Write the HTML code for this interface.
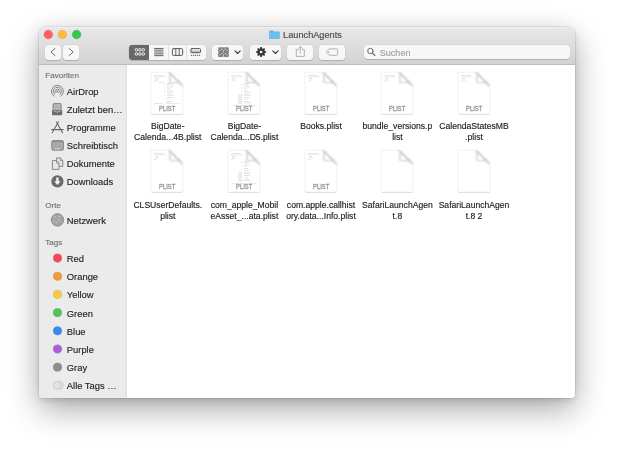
<!DOCTYPE html>
<html><head><meta charset="utf-8">
<style>
html,body{margin:0;padding:0;}
body{will-change:transform;width:642px;height:475px;overflow:hidden;background:#fff;position:relative;font-family:"Liberation Sans",sans-serif;}
.abs{position:absolute;}
.t{position:absolute;white-space:nowrap;-webkit-text-stroke:0.15px currentColor;}
#shadow{position:absolute;left:39px;top:27px;width:536px;height:371px;border-radius:5px 5px 4px 4px;box-shadow:0 12px 32px rgba(0,0,0,0.33),0 3px 6px rgba(0,0,0,0.10),0 0 26px rgba(0,0,0,0.05);}
#win{position:absolute;left:39px;top:27px;width:536px;height:371px;border-radius:5px 5px 4px 4px;overflow:hidden;box-shadow:0 0 0 0.5px rgba(0,0,0,0.14);background:#fff;}
#toolbar{position:absolute;left:0;top:0;width:100%;height:37px;box-shadow:inset 0 1px 0 rgba(255,255,255,0.3);background:linear-gradient(#e8e8e8,#d3d3d3);border-bottom:1px solid #bdbdbd;}
#sidebar{position:absolute;left:0;top:38px;width:88px;bottom:0;background:#ebebeb;box-shadow:inset -1px 0 0 #e0e0e0, inset -2px 0 0 #e6e6e6;}
.btn{position:absolute;background:#f7f7f7;box-shadow:0 0.5px 0.6px rgba(0,0,0,0.28),0 0 0 0.4px rgba(0,0,0,0.07);}
.lbl{position:absolute;width:80px;text-align:center;white-space:nowrap;-webkit-text-stroke:0.15px currentColor;}
</style></head><body>
<div id="shadow"></div>
<div id="win"><div id="toolbar"></div><div id="sidebar"></div></div>
<div class="btn" style="left:44.70px;top:44.50px;width:16.50px;height:15.00px;border-radius:3px;"></div><div class="btn" style="left:62.90px;top:44.50px;width:16.50px;height:15.00px;border-radius:3px;"></div><div class="btn" style="left:128.90px;top:44.50px;width:77.10px;height:15.00px;border-radius:3px;"></div><div class="abs" style="left:128.9px;top:44.5px;width:20.3px;height:15.00px;background:#686868;border-radius:3px 0 0 3px;"></div><div class="abs" style="left:168.3px;top:44.5px;width:0.6px;height:15.00px;background:#e2e2e2;"></div><div class="abs" style="left:186.3px;top:44.5px;width:0.6px;height:15.00px;background:#e2e2e2;"></div><div class="btn" style="left:212.10px;top:44.50px;width:31.40px;height:15.00px;border-radius:3px;"></div><div class="btn" style="left:250.00px;top:44.50px;width:30.80px;height:15.00px;border-radius:3px;"></div><div class="btn" style="left:287.00px;top:44.50px;width:25.90px;height:15.00px;border-radius:3px;"></div><div class="btn" style="left:318.90px;top:44.50px;width:25.90px;height:15.00px;border-radius:3px;"></div><div class="btn" style="left:363.50px;top:44.60px;width:206.50px;height:14.10px;border-radius:3.5px;"></div>
<svg class="abs" style="left:0;top:0" width="642" height="475" viewBox="0 0 642 475"><path d="M55.0,48.4 L50.9,51.95 L55.0,55.5" fill="none" stroke-linecap="round" stroke-linejoin="round" stroke="#686868" stroke-width="0.95"/><path d="M69.1,48.4 L73.2,51.95 L69.1,55.5" fill="none" stroke-linecap="round" stroke-linejoin="round" stroke="#686868" stroke-width="0.95"/><circle cx="136.4" cy="49.8" r="1.3" fill="none" stroke="#fff" stroke-width="0.85"/><circle cx="136.4" cy="54.0" r="1.3" fill="none" stroke="#fff" stroke-width="0.85"/><circle cx="139.85" cy="49.8" r="1.3" fill="none" stroke="#fff" stroke-width="0.85"/><circle cx="139.85" cy="54.0" r="1.3" fill="none" stroke="#fff" stroke-width="0.85"/><circle cx="143.3" cy="49.8" r="1.3" fill="none" stroke="#fff" stroke-width="0.85"/><circle cx="143.3" cy="54.0" r="1.3" fill="none" stroke="#fff" stroke-width="0.85"/><rect x="154.2" y="48.4" width="9.2" height="7.4" fill="#bcbcbc"/><rect x="154.2" y="47.949999999999996" width="9.2" height="0.9" fill="#5e5e5e"/><rect x="154.2" y="50.449999999999996" width="9.2" height="0.9" fill="#8a8a8a"/><rect x="154.2" y="52.849999999999994" width="9.2" height="0.9" fill="#8a8a8a"/><rect x="154.2" y="55.25" width="9.2" height="0.9" fill="#5e5e5e"/><rect x="172.4" y="48.6" width="10.2" height="6.8" rx="1.0" fill="none" stroke-linecap="round" stroke-linejoin="round" stroke="#555" stroke-width="1"/><path d="M175.8,48.6 V55.4 M179.2,48.6 V55.4" stroke="#555" stroke-width="0.9"/><rect x="190.9" y="50.6" width="9.6" height="2.0" fill="#b9b9b9"/><rect x="190.9" y="48.6" width="9.6" height="4.1" rx="1.0" fill="none" stroke-linecap="round" stroke-linejoin="round" stroke="#555" stroke-width="1"/><rect x="190.90" y="54.8" width="1.2" height="1.0" fill="#555"/><rect x="192.90" y="54.8" width="1.2" height="1.0" fill="#555"/><rect x="194.90" y="54.8" width="1.2" height="1.0" fill="#555"/><rect x="196.90" y="54.8" width="1.2" height="1.0" fill="#555"/><rect x="198.90" y="54.8" width="1.2" height="1.0" fill="#555"/><rect x="218.3" y="47.3" width="10.4" height="9.6" rx="0.6" fill="#8c8c8c"/><circle cx="220.0" cy="50.6" r="1.35" fill="#c4c4c4" stroke="#555" stroke-width="0.7"/><circle cx="220.0" cy="54.9" r="1.35" fill="#c4c4c4" stroke="#555" stroke-width="0.7"/><circle cx="223.5" cy="50.6" r="1.35" fill="#c4c4c4" stroke="#555" stroke-width="0.7"/><circle cx="223.5" cy="54.9" r="1.35" fill="#c4c4c4" stroke="#555" stroke-width="0.7"/><circle cx="227.0" cy="50.6" r="1.35" fill="#c4c4c4" stroke="#555" stroke-width="0.7"/><circle cx="227.0" cy="54.9" r="1.35" fill="#c4c4c4" stroke="#555" stroke-width="0.7"/><circle cx="221.75" cy="49.4" r="0.55" fill="#f0f0f0"/><circle cx="225.25" cy="49.4" r="0.55" fill="#f0f0f0"/><circle cx="223.5" cy="52.0" r="0.55" fill="#f0f0f0"/><circle cx="221.75" cy="53.7" r="0.55" fill="#f0f0f0"/><circle cx="225.25" cy="53.7" r="0.55" fill="#f0f0f0"/><circle cx="223.5" cy="56.2" r="0.55" fill="#f0f0f0"/><path d="M235.0,50.9 L237.6,53.5 L240.2,50.9" fill="none" stroke-linecap="round" stroke-linejoin="round" stroke="#3c3c3c" stroke-width="1.15"/><path d="M272.8,50.9 L275.4,53.5 L278.0,50.9" fill="none" stroke-linecap="round" stroke-linejoin="round" stroke="#3c3c3c" stroke-width="1.15"/><path d="M260.17,48.63 L260.30,47.06 L261.90,47.06 L262.03,48.63 L262.83,48.95 L264.03,47.95 L265.15,49.07 L264.15,50.27 L264.47,51.07 L266.04,51.20 L266.04,52.80 L264.47,52.93 L264.15,53.73 L265.15,54.93 L264.03,56.05 L262.83,55.05 L262.03,55.37 L261.90,56.94 L260.30,56.94 L260.17,55.37 L259.37,55.05 L258.17,56.05 L257.05,54.93 L258.05,53.73 L257.73,52.93 L256.16,52.80 L256.16,51.20 L257.73,51.07 L258.05,50.27 L257.05,49.07 L258.17,47.95 L259.37,48.95Z" fill="#353535"/><circle cx="261.1" cy="52.0" r="3.6" fill="#353535"/><circle cx="261.1" cy="52.0" r="1.35" fill="#fbfbfb"/><path d="M298,49.6 H296.3 V56.4 H304.3 V49.6 H302.6 M300.3,53.2 V46.8 M298.3,48.6 L300.3,46.6 L302.3,48.6" fill="none" stroke-linecap="round" stroke-linejoin="round" stroke="#a3a3a3" stroke-width="0.85"/><path d="M329.6,48.9 H336.9 Q337.6,48.9 337.6,49.6 V54.6 Q337.6,55.3 336.9,55.3 H329.6 L326.3,52.1 Z" fill="none" stroke-linecap="round" stroke-linejoin="round" stroke="#a8a8a8" stroke-width="0.85"/><circle cx="328.7" cy="52.1" r="0.6" fill="none" stroke="#a8a8a8" stroke-width="0.6"/><circle cx="370.4" cy="51.0" r="2.7" fill="none" stroke-linecap="round" stroke-linejoin="round" stroke="#6a6a6a" stroke-width="1"/><path d="M372.4,53.0 L375.0,55.6" fill="none" stroke-linecap="round" stroke-linejoin="round" stroke="#6a6a6a" stroke-width="1.1"/><path d="M269.3,31.2 Q269.3,30.4 270.1,30.4 H272.9 L274,31.4 H278.9 Q279.6,31.4 279.6,32.1 V38.2 Q279.6,38.9 278.9,38.9 H270 Q269.3,38.9 269.3,38.2 Z" fill="#5fb2ea"/><path d="M269.3,32.6 H279.6 V38.2 Q279.6,38.9 278.9,38.9 H270 Q269.3,38.9 269.3,38.2 Z" fill="#6cc0f2"/><circle cx="48.3" cy="34.5" r="4.3" fill="#fc615d" stroke="#de4a46" stroke-width="0.4"/><circle cx="62.4" cy="34.5" r="4.3" fill="#fdbc40" stroke="#dea236" stroke-width="0.4"/><circle cx="76.6" cy="34.5" r="4.3" fill="#34c84a" stroke="#27aa35" stroke-width="0.4"/><path d="M54.27,96.30 A5.9,5.9 0 1 1 60.53,96.30" fill="none" stroke="#7a7a7a" stroke-width="0.95"/><path d="M55.31,94.65 A3.95,3.95 0 1 1 59.49,94.65" fill="none" stroke="#7a7a7a" stroke-width="0.95"/><path d="M56.34,93.00 A2.0,2.0 0 1 1 58.46,93.00" fill="none" stroke="#7a7a7a" stroke-width="0.95"/><circle cx="57.4" cy="91.3" r="0.85" fill="#7a7a7a"/><path d="M53.0,104.6 Q53.0,103.4 54.2,103.4 H60.0 Q61.2,103.4 61.2,104.6 V110.5 H53.0 Z" fill="#b3b3b3" stroke="#777" stroke-width="0.8"/><path d="M52.0,110.2 H62.2 V114.2 Q62.2,115.2 61.2,115.2 H53.0 Q52.0,115.2 52.0,114.2 Z" fill="#6c6c6c"/><path d="M53.6,110.9 Q57.1,113.4 60.6,110.9" fill="none" stroke="#d8d8d8" stroke-width="0.7"/><path d="M56.4,121.9 L62.6,132.8 M58.4,121.9 L52.2,132.8 M51.6,129.6 H63.2" fill="none" stroke="#666" stroke-width="1.05" stroke-linecap="round"/><rect x="51.7" y="140.6" width="11.8" height="9.6" rx="1.4" fill="#a9a9a9" stroke="#7a7a7a" stroke-width="0.8"/><rect x="52.1" y="141.1" width="11" height="1.0" fill="#8a8a8a"/><rect x="55.30" y="148.3" width="1" height="1" fill="#f0f0f0"/><rect x="57.00" y="148.3" width="1" height="1" fill="#f0f0f0"/><rect x="58.70" y="148.3" width="1" height="1" fill="#f0f0f0"/><path d="M56.4,158.0 H60.4 L62.8,160.4 V166.4 H56.4 Z" fill="#e6e6e6" stroke="#707070" stroke-width="0.8" stroke-linejoin="round"/><path d="M60.2,158.2 V160.6 H62.6" fill="none" stroke="#707070" stroke-width="0.6"/><path d="M52.4,160.6 H56.6 L59.0,163.0 V169.4 H52.4 Z" fill="#e9e9e9" stroke="#707070" stroke-width="0.8" stroke-linejoin="round"/><path d="M56.4,160.8 V163.2 H58.8" fill="none" stroke="#707070" stroke-width="0.6"/><circle cx="57.4" cy="181.4" r="6.1" fill="#6b6b6b"/><path d="M56.2,177.4 H58.6 V181.2 H60.6 L57.4,184.9 L54.2,181.2 H56.2 Z" fill="#f2f2f2"/><circle cx="57.45" cy="219.9" r="6.3" fill="#a3a3a3" stroke="#858585" stroke-width="0.7"/><circle cx="55" cy="217" r="0.8" fill="#c8c8c8"/><circle cx="59.5" cy="216.5" r="0.8" fill="#c8c8c8"/><circle cx="56.5" cy="222.5" r="0.8" fill="#c8c8c8"/><circle cx="60" cy="221" r="0.8" fill="#c8c8c8"/><circle cx="54" cy="221.5" r="0.8" fill="#c8c8c8"/><circle cx="58" cy="219.5" r="0.8" fill="#c8c8c8"/><circle cx="57.5" cy="258.10" r="4.1" fill="#f24a52" stroke="#d8343c" stroke-width="0.5"/><circle cx="57.5" cy="276.28" r="4.1" fill="#f29a3c" stroke="#d8832a" stroke-width="0.5"/><circle cx="57.5" cy="294.46" r="4.1" fill="#f6c945" stroke="#dcae30" stroke-width="0.5"/><circle cx="57.5" cy="312.64" r="4.1" fill="#4fc45b" stroke="#3aa846" stroke-width="0.5"/><circle cx="57.5" cy="330.82" r="4.1" fill="#3a87f3" stroke="#2a6fd6" stroke-width="0.5"/><circle cx="57.5" cy="349.00" r="4.1" fill="#ad5fd9" stroke="#9348bf" stroke-width="0.5"/><circle cx="57.5" cy="367.18" r="4.1" fill="#8e8e8e" stroke="#777777" stroke-width="0.5"/><circle cx="59.4" cy="385.36" r="3.9" fill="#e3e3e3" stroke="#bdbdbd" stroke-width="0.6"/><circle cx="57.0" cy="385.36" r="3.9" fill="#e3e3e3" stroke="#bdbdbd" stroke-width="0.6"/></svg>
<svg width="0" height="0" style="position:absolute">
<defs>
<filter id="psh" filterUnits="userSpaceOnUse" x="-5" y="-5" width="50" height="55"><feGaussianBlur stdDeviation="0.9"/><feComponentTransfer><feFuncA type="linear" slope="0.35"/></feComponentTransfer></filter>
<filter id="fsh" filterUnits="userSpaceOnUse" x="-5" y="-5" width="50" height="55"><feGaussianBlur stdDeviation="0.9"/></filter>
<filter id="fsh2" filterUnits="userSpaceOnUse" x="-5" y="-5" width="50" height="55"><feGaussianBlur stdDeviation="0.9"/></filter>
<linearGradient id="flg" x1="0" y1="0" x2="1" y2="1"><stop offset="0" stop-color="#f4f4f4"/><stop offset="1" stop-color="#fdfdfd"/></linearGradient>
<linearGradient id="shd" x1="0" y1="0" x2="0" y2="1"><stop offset="0" stop-color="#e6e6e6"/><stop offset="1" stop-color="#f8f8f8"/></linearGradient>
<symbol id="blank" viewBox="0 0 34 44"><path d="M1,1.2 H18.4 Q19.3,1.2 19.9,1.8 L32.2,14.1 Q32.8,14.7 32.8,15.6 V42.8 Q32.8,43.4 32.2,43.4 H1.6 Q1,43.4 1,42.8 Z" fill="#fff" filter="url(#psh)"/>
<path d="M1,1.2 H18.4 Q19.3,1.2 19.9,1.8 L32.2,14.1 Q32.8,14.7 32.8,15.6 V42.8 Q32.8,43.4 32.2,43.4 H1.6 Q1,43.4 1,42.8 Z" fill="#fff" stroke="#e3e3e3" stroke-width="0.5"/>
<path d="M1.5,43.3 H32.3" stroke="#cdcdcd" stroke-width="0.6"/>
<path d="M20.2,3.4 V11.2 H29.6" fill="none" stroke="#d2d2d2" stroke-width="1.8" filter="url(#fsh)"/>
<path d="M21.4,4.4 V10.6 H27.6 Z" fill="#fff"/>
<path d="M19.2,1.5 L32.5,14.8" stroke="#b0b0b0" stroke-width="1.2" filter="url(#fsh2)"/><path d="M19.1,1.4 L32.6,14.9" stroke="#d6d6d6" stroke-width="0.5"/></symbol>
<symbol id="p1" viewBox="0 0 34 44"><path d="M1,1.2 H18.4 Q19.3,1.2 19.9,1.8 L32.2,14.1 Q32.8,14.7 32.8,15.6 V42.8 Q32.8,43.4 32.2,43.4 H1.6 Q1,43.4 1,42.8 Z" fill="#fff" filter="url(#psh)"/>
<path d="M1,1.2 H18.4 Q19.3,1.2 19.9,1.8 L32.2,14.1 Q32.8,14.7 32.8,15.6 V42.8 Q32.8,43.4 32.2,43.4 H1.6 Q1,43.4 1,42.8 Z" fill="#fff" stroke="#e3e3e3" stroke-width="0.5"/>
<path d="M1.5,43.3 H32.3" stroke="#cdcdcd" stroke-width="0.6"/>
<path d="M20.2,3.4 V11.2 H29.6" fill="none" stroke="#d2d2d2" stroke-width="1.8" filter="url(#fsh)"/>
<path d="M21.4,4.4 V10.6 H27.6 Z" fill="#fff"/>
<path d="M19.2,1.5 L32.5,14.8" stroke="#b0b0b0" stroke-width="1.2" filter="url(#fsh2)"/><path d="M19.1,1.4 L32.6,14.9" stroke="#d6d6d6" stroke-width="0.5"/><g opacity="0.8"><rect x="4" y="4" width="10" height="0.6" fill="#cdcdcd"/><rect x="4" y="5.6" width="12" height="0.6" fill="#d5d5d5"/><rect x="5" y="7.2" width="3" height="0.6" fill="#c5c5c5"/><rect x="5" y="8.8" width="4" height="0.6" fill="#cdcdcd"/><rect x="4" y="10.4" width="2" height="0.6" fill="#cdcdcd"/></g><rect x="9" y="11.5" width="5" height="0.6" fill="#cfcfcf"/><g opacity="0.8"><rect x="14.5" y="13" width="1" height="0.7" fill="#b8b8b8"/><rect x="17" y="12" width="4" height="0.6" fill="#c4c4c4"/><rect x="17" y="13.6" width="7" height="0.6" fill="#d0d0d0"/><rect x="14.5" y="16.6" width="1" height="0.7" fill="#b8b8b8"/><rect x="17" y="15.600000000000001" width="6" height="0.6" fill="#c4c4c4"/><rect x="17" y="17.200000000000003" width="3" height="0.6" fill="#d0d0d0"/><rect x="14.5" y="20.200000000000003" width="1" height="0.7" fill="#b8b8b8"/><rect x="17" y="19.200000000000003" width="5" height="0.6" fill="#c4c4c4"/><rect x="17" y="20.800000000000004" width="7" height="0.6" fill="#d0d0d0"/><rect x="14.5" y="23.800000000000004" width="1" height="0.7" fill="#b8b8b8"/><rect x="17" y="22.800000000000004" width="5" height="0.6" fill="#c4c4c4"/><rect x="17" y="24.400000000000006" width="7" height="0.6" fill="#d0d0d0"/><rect x="14.5" y="27.400000000000006" width="1" height="0.7" fill="#b8b8b8"/><rect x="17" y="26.400000000000006" width="6" height="0.6" fill="#c4c4c4"/><rect x="17" y="28.000000000000007" width="3" height="0.6" fill="#d0d0d0"/><rect x="14.5" y="31.000000000000007" width="1" height="0.7" fill="#b8b8b8"/><rect x="17" y="30.000000000000007" width="6" height="0.6" fill="#c4c4c4"/><rect x="17" y="31.60000000000001" width="3" height="0.6" fill="#d0d0d0"/></g><rect x="4" y="32" width="9" height="0.5" fill="#d0d0d0"/><rect x="16" y="32" width="14" height="0.5" fill="#d8d8d8"/><text transform="translate(17.1,40.3) scale(0.8,1)" text-anchor="middle" font-family="Liberation Sans" font-size="7.3" fill="#8e8e8e" stroke="#8e8e8e" stroke-width="0.25">PLIST</text></symbol>
<symbol id="p2" viewBox="0 0 34 44"><path d="M1,1.2 H18.4 Q19.3,1.2 19.9,1.8 L32.2,14.1 Q32.8,14.7 32.8,15.6 V42.8 Q32.8,43.4 32.2,43.4 H1.6 Q1,43.4 1,42.8 Z" fill="#fff" filter="url(#psh)"/>
<path d="M1,1.2 H18.4 Q19.3,1.2 19.9,1.8 L32.2,14.1 Q32.8,14.7 32.8,15.6 V42.8 Q32.8,43.4 32.2,43.4 H1.6 Q1,43.4 1,42.8 Z" fill="#fff" stroke="#e3e3e3" stroke-width="0.5"/>
<path d="M1.5,43.3 H32.3" stroke="#cdcdcd" stroke-width="0.6"/>
<path d="M20.2,3.4 V11.2 H29.6" fill="none" stroke="#d2d2d2" stroke-width="1.8" filter="url(#fsh)"/>
<path d="M21.4,4.4 V10.6 H27.6 Z" fill="#fff"/>
<path d="M19.2,1.5 L32.5,14.8" stroke="#b0b0b0" stroke-width="1.2" filter="url(#fsh2)"/><path d="M19.1,1.4 L32.6,14.9" stroke="#d6d6d6" stroke-width="0.5"/><g opacity="0.8"><rect x="4" y="4" width="10" height="0.6" fill="#cdcdcd"/><rect x="4" y="5.6" width="12" height="0.6" fill="#d5d5d5"/><rect x="5" y="7.2" width="3" height="0.6" fill="#c5c5c5"/><rect x="5" y="8.8" width="4" height="0.6" fill="#cdcdcd"/><rect x="4" y="10.4" width="2" height="0.6" fill="#cdcdcd"/></g><g opacity="0.8"><rect x="14.5" y="13" width="1" height="0.7" fill="#b8b8b8"/><rect x="17" y="12" width="5" height="0.6" fill="#c4c4c4"/><rect x="17" y="13.6" width="4" height="0.6" fill="#d0d0d0"/><rect x="14.5" y="16.6" width="1" height="0.7" fill="#b8b8b8"/><rect x="17" y="15.600000000000001" width="6" height="0.6" fill="#c4c4c4"/><rect x="17" y="17.200000000000003" width="3" height="0.6" fill="#d0d0d0"/><rect x="14.5" y="20.200000000000003" width="1" height="0.7" fill="#b8b8b8"/><rect x="17" y="19.200000000000003" width="4" height="0.6" fill="#c4c4c4"/><rect x="17" y="20.800000000000004" width="7" height="0.6" fill="#d0d0d0"/><rect x="14.5" y="23.800000000000004" width="1" height="0.7" fill="#b8b8b8"/><rect x="17" y="22.800000000000004" width="5" height="0.6" fill="#c4c4c4"/><rect x="17" y="24.400000000000006" width="7" height="0.6" fill="#d0d0d0"/><rect x="14.5" y="27.400000000000006" width="1" height="0.7" fill="#b8b8b8"/><rect x="17" y="26.400000000000006" width="6" height="0.6" fill="#c4c4c4"/><rect x="17" y="28.000000000000007" width="4" height="0.6" fill="#d0d0d0"/><rect x="14.5" y="31.000000000000007" width="1" height="0.7" fill="#b8b8b8"/><rect x="17" y="30.000000000000007" width="5" height="0.6" fill="#c4c4c4"/><rect x="17" y="31.60000000000001" width="7" height="0.6" fill="#d0d0d0"/></g><rect x="11" y="23" width="4" height="10" fill="#dcdcdc" opacity="0.5"/><rect x="4" y="34.5" width="26" height="0.5" fill="#d4d4d4"/><text transform="translate(17.1,40.3) scale(0.8,1)" text-anchor="middle" font-family="Liberation Sans" font-size="7.3" fill="#8e8e8e" stroke="#8e8e8e" stroke-width="0.25">PLIST</text></symbol>
<symbol id="p3" viewBox="0 0 34 44"><path d="M1,1.2 H18.4 Q19.3,1.2 19.9,1.8 L32.2,14.1 Q32.8,14.7 32.8,15.6 V42.8 Q32.8,43.4 32.2,43.4 H1.6 Q1,43.4 1,42.8 Z" fill="#fff" filter="url(#psh)"/>
<path d="M1,1.2 H18.4 Q19.3,1.2 19.9,1.8 L32.2,14.1 Q32.8,14.7 32.8,15.6 V42.8 Q32.8,43.4 32.2,43.4 H1.6 Q1,43.4 1,42.8 Z" fill="#fff" stroke="#e3e3e3" stroke-width="0.5"/>
<path d="M1.5,43.3 H32.3" stroke="#cdcdcd" stroke-width="0.6"/>
<path d="M20.2,3.4 V11.2 H29.6" fill="none" stroke="#d2d2d2" stroke-width="1.8" filter="url(#fsh)"/>
<path d="M21.4,4.4 V10.6 H27.6 Z" fill="#fff"/>
<path d="M19.2,1.5 L32.5,14.8" stroke="#b0b0b0" stroke-width="1.2" filter="url(#fsh2)"/><path d="M19.1,1.4 L32.6,14.9" stroke="#d6d6d6" stroke-width="0.5"/><g opacity="0.8"><rect x="4" y="4" width="10" height="0.6" fill="#cdcdcd"/><rect x="4" y="5.6" width="12" height="0.6" fill="#d5d5d5"/><rect x="5" y="7.2" width="3" height="0.6" fill="#c5c5c5"/><rect x="5" y="8.8" width="4" height="0.6" fill="#cdcdcd"/><rect x="4" y="10.4" width="2" height="0.6" fill="#cdcdcd"/></g><text transform="translate(17.1,40.3) scale(0.8,1)" text-anchor="middle" font-family="Liberation Sans" font-size="7.3" fill="#8e8e8e" stroke="#8e8e8e" stroke-width="0.25">PLIST</text></symbol>
</defs></svg>
<div class="t" style="left:283.10px;top:29.11px;font-size:9.2px;line-height:12px;color:#4b4b4b;">LaunchAgents</div><div class="t" style="left:379.70px;top:46.55px;font-size:9.1px;line-height:12px;color:#a2a2a2;">Suchen</div><div class="t" style="left:45.30px;top:70.59px;font-size:8.1px;line-height:10px;color:#747474;">Favoriten</div><div class="t" style="left:66.80px;top:86.34px;font-size:9.4px;line-height:12px;color:#262626;">AirDrop</div><div class="t" style="left:66.80px;top:104.44px;font-size:9.4px;line-height:12px;color:#262626;">Zuletzt ben…</div><div class="t" style="left:66.80px;top:121.94px;font-size:9.4px;line-height:12px;color:#262626;">Programme</div><div class="t" style="left:66.80px;top:140.34px;font-size:9.4px;line-height:12px;color:#262626;">Schreibtisch</div><div class="t" style="left:66.80px;top:158.34px;font-size:9.4px;line-height:12px;color:#262626;">Dokumente</div><div class="t" style="left:66.80px;top:176.34px;font-size:9.4px;line-height:12px;color:#262626;">Downloads</div><div class="t" style="left:45.30px;top:200.89px;font-size:8.1px;line-height:10px;color:#747474;">Orte</div><div class="t" style="left:66.80px;top:215.04px;font-size:9.4px;line-height:12px;color:#262626;">Netzwerk</div><div class="t" style="left:45.30px;top:238.49px;font-size:8.1px;line-height:10px;color:#747474;">Tags</div><div class="t" style="left:66.80px;top:252.94px;font-size:9.4px;line-height:12px;color:#262626;">Red</div><div class="t" style="left:66.80px;top:271.14px;font-size:9.4px;line-height:12px;color:#262626;">Orange</div><div class="t" style="left:66.80px;top:289.34px;font-size:9.4px;line-height:12px;color:#262626;">Yellow</div><div class="t" style="left:66.80px;top:307.54px;font-size:9.4px;line-height:12px;color:#262626;">Green</div><div class="t" style="left:66.80px;top:325.74px;font-size:9.4px;line-height:12px;color:#262626;">Blue</div><div class="t" style="left:66.80px;top:343.94px;font-size:9.4px;line-height:12px;color:#262626;">Purple</div><div class="t" style="left:66.80px;top:362.14px;font-size:9.4px;line-height:12px;color:#262626;">Gray</div><div class="t" style="left:66.80px;top:380.34px;font-size:9.4px;line-height:12px;color:#262626;">Alle Tags …</div>
<svg class="abs" style="left:150.30px;top:71.00px;" width="34" height="44" viewBox="0 0 34 44"><use href="#p1"/></svg><div class="lbl" style="left:127.80px;top:121.12px;font-size:8.6px;line-height:11px;color:#1e1e1e;">BigDate-<br>Calenda...4B.plist</div><svg class="abs" style="left:226.90px;top:71.00px;" width="34" height="44" viewBox="0 0 34 44"><use href="#p2"/></svg><div class="lbl" style="left:204.40px;top:121.12px;font-size:8.6px;line-height:11px;color:#1e1e1e;">BigDate-<br>Calenda...D5.plist</div><svg class="abs" style="left:303.50px;top:71.00px;" width="34" height="44" viewBox="0 0 34 44"><use href="#p3"/></svg><div class="lbl" style="left:281.00px;top:121.12px;font-size:8.6px;line-height:11px;color:#1e1e1e;">Books.plist</div><svg class="abs" style="left:379.90px;top:71.00px;" width="34" height="44" viewBox="0 0 34 44"><use href="#p3"/></svg><div class="lbl" style="left:357.40px;top:121.12px;font-size:8.6px;line-height:11px;color:#1e1e1e;">bundle_versions.p<br>list</div><svg class="abs" style="left:456.50px;top:71.00px;" width="34" height="44" viewBox="0 0 34 44"><use href="#p3"/></svg><div class="lbl" style="left:434.00px;top:121.12px;font-size:8.6px;line-height:11px;color:#1e1e1e;">CalendaStatesMB<br>.plist</div><svg class="abs" style="left:150.30px;top:149.00px;" width="34" height="44" viewBox="0 0 34 44"><use href="#p3"/></svg><div class="lbl" style="left:127.80px;top:199.62px;font-size:8.6px;line-height:11px;color:#1e1e1e;">CLSUserDefaults.<br>plist</div><svg class="abs" style="left:226.90px;top:149.00px;" width="34" height="44" viewBox="0 0 34 44"><use href="#p2"/></svg><div class="lbl" style="left:204.40px;top:199.62px;font-size:8.6px;line-height:11px;color:#1e1e1e;">com_apple_Mobil<br>eAsset_...ata.plist</div><svg class="abs" style="left:303.50px;top:149.00px;" width="34" height="44" viewBox="0 0 34 44"><use href="#p3"/></svg><div class="lbl" style="left:281.00px;top:199.62px;font-size:8.6px;line-height:11px;color:#1e1e1e;">com.apple.callhist<br>ory.data...Info.plist</div><svg class="abs" style="left:379.90px;top:149.00px;" width="34" height="44" viewBox="0 0 34 44"><use href="#blank"/></svg><div class="lbl" style="left:357.40px;top:199.62px;font-size:8.6px;line-height:11px;color:#1e1e1e;">SafariLaunchAgen<br>t.8</div><svg class="abs" style="left:456.50px;top:149.00px;" width="34" height="44" viewBox="0 0 34 44"><use href="#blank"/></svg><div class="lbl" style="left:434.00px;top:199.62px;font-size:8.6px;line-height:11px;color:#1e1e1e;">SafariLaunchAgen<br>t.8 2</div>
</body></html>
